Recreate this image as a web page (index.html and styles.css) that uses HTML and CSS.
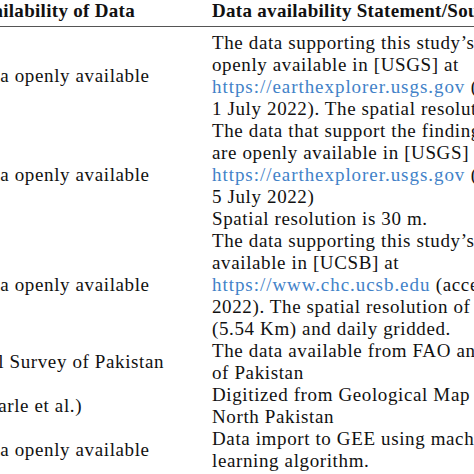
FILE: index.html
```html
<!DOCTYPE html>
<html lang="en">
<head>
<meta charset="utf-8">
<title>Data availability</title>
<link rel="stylesheet" href="styles.css">
</head>
<body>
<div class="sheet">
  <table class="data-table">
    <thead>
      <tr>
        <th class="col-avail">Availability of Data</th>
        <th class="col-statement">Data availability Statement/Source</th>
      </tr>
    </thead>
    <tbody>
      <tr class="first-row">
        <td class="col-avail">Data openly available</td>
        <td class="col-statement">The data supporting this study’s findings are<br>openly available in [USGS] at<br><a class="link" href="#">https://earthexplorer.usgs.gov</a> (accessed on<br>1 July 2022). The spatial resolution of Landsat is 30 m.</td>
      </tr>
      <tr>
        <td class="col-avail">Data openly available</td>
        <td class="col-statement">The data that support the findings of this study<br>are openly available in [USGS] at<br><a class="link" href="#">https://earthexplorer.usgs.gov</a> (accessed on<br>5 July 2022)<br>Spatial resolution is 30 m.</td>
      </tr>
      <tr>
        <td class="col-avail">Data openly available</td>
        <td class="col-statement">The data supporting this study’s findings are openly<br>available in [UCSB] at<br><a class="link" href="#">https://www.chc.ucsb.edu</a> (accessed on 10 July<br>2022). The spatial resolution of CHIRPS is 0.05°<br>(5.54 Km) and daily gridded.</td>
      </tr>
      <tr>
        <td class="col-avail">Soil Survey of Pakistan</td>
        <td class="col-statement">The data available from FAO and Soil Survey<br>of Pakistan</td>
      </tr>
      <tr>
        <td class="col-avail">(Searle et al.)</td>
        <td class="col-statement">Digitized from Geological Map of<br>North Pakistan</td>
      </tr>
      <tr>
        <td class="col-avail">Data openly available</td>
        <td class="col-statement">Data import to GEE using machine<br>learning algorithm.</td>
      </tr>
    </tbody>
  </table>
</div>
</body>
</html>
```
FILE: styles.css
```css
html, body {
  margin: 0;
  padding: 0;
  background: #ffffff;
  overflow: hidden;
}

body {
  font-family: "Liberation Serif", "Times New Roman", serif;
  font-size: 19px;
  line-height: 22px;
  color: #111111;
  letter-spacing: 0.62px;
}

.sheet {
  margin-left: -29px;
}

.data-table {
  border-collapse: collapse;
  white-space: nowrap;
}

.data-table th,
.data-table td {
  padding: 0;
  text-align: left;
  vertical-align: middle;
}

.data-table th {
  font-weight: bold;
  letter-spacing: 0.3px;
  padding-bottom: 4px;
  border-bottom: 1px solid #555555;
}

.col-avail {
  width: 241px;
  min-width: 241px;
}

.first-row td {
  padding-top: 5px;
}

.link {
  color: #4282c8;
  text-decoration: none;
  letter-spacing: 0.95px;
}
```
